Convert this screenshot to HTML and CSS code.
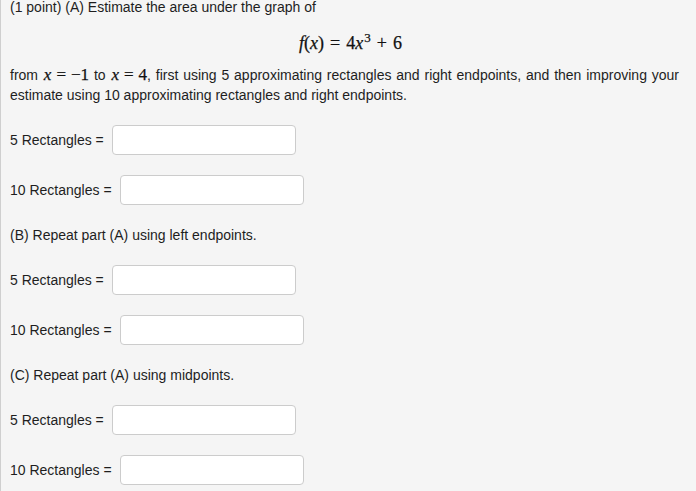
FILE: index.html
```html
<!DOCTYPE html>
<html>
<head>
<meta charset="utf-8">
<link rel="stylesheet" href="styles.css">
</head>
<body>
<div class="problem">
  <p class="title">(1 point) (A) Estimate the area under the graph of</p>
  <div class="display"><span class="math"><i>f</i>(<i>x</i>)<span class="op">=</span>4<i>x</i><sup>3</sup><span class="op">+</span>6</span></div>
  <p class="text">from <span class="math m-inline"><i>x</i><span class="op">=</span>−1</span> to <span class="math m-inline"><i>x</i><span class="op">=</span>4</span>, first using 5 approximating rectangles and right endpoints, and then improving your estimate using 10 approximating rectangles and right endpoints.</p>
  <div class="row"><label>5 Rectangles =</label><input class="answer" type="text"></div>
  <div class="row"><label>10 Rectangles =</label><input class="answer" type="text"></div>
  <p class="text">(B) Repeat part (A) using left endpoints.</p>
  <div class="row"><label>5 Rectangles =</label><input class="answer" type="text"></div>
  <div class="row"><label>10 Rectangles =</label><input class="answer" type="text"></div>
  <p class="text">(C) Repeat part (A) using midpoints.</p>
  <div class="row"><label>5 Rectangles =</label><input class="answer" type="text"></div>
  <div class="row"><label>10 Rectangles =</label><input class="answer" type="text"></div>
</div>
</body>
</html>
```
FILE: styles.css
```css
html, body {
  margin: 0;
  padding: 0;
  background: #f5f5f5;
}
body {
  border-left: 1px solid #cfcfcf;
  height: 491px;
  box-sizing: border-box;
  overflow: hidden;
}
.problem {
  font-family: "Liberation Sans", Arial, sans-serif;
  font-size: 14px;
  line-height: 20px;
  color: #1e1e1e;
  padding: 0 17px 0 9px;
  display: flex;
  flex-direction: column;
  gap: 20px;
}
.problem p {
  margin: 0;
}
.text {
  text-align: justify;
}
.title {
  margin-top: -3px !important;
}
.display {
  text-align: center;
  height: 28px;
  margin: -8px 0 -12px;
  line-height: 28px;
  padding-left: 12px;
}
.math {
  font-family: "Liberation Serif", "Times New Roman", serif;
  font-size: 18px;
  color: #111;
  white-space: nowrap;
  -webkit-text-stroke: 0.25px #111;
}
.math i {
  font-style: italic;
}
.math .op {
  padding: 0 6px;
}
.math sup {
  font-size: 13px;
  vertical-align: 7px;
  line-height: 0;
  margin-left: 1px;
}
.m-inline {
  font-size: 17px;
  line-height: 20px;
  margin-left: 1px;
}
.m-inline .op {
  padding: 0 5px;
}
.row {
  display: flex;
  align-items: center;
  height: 30px;
}
.row label {
  margin-right: 8px;
}
.answer {
  width: 184px;
  height: 30px;
  box-sizing: border-box;
  border: 1px solid #cccccc;
  border-radius: 4px;
  background: #fff;
  margin: 0;
  padding: 4px 6px;
}
```
